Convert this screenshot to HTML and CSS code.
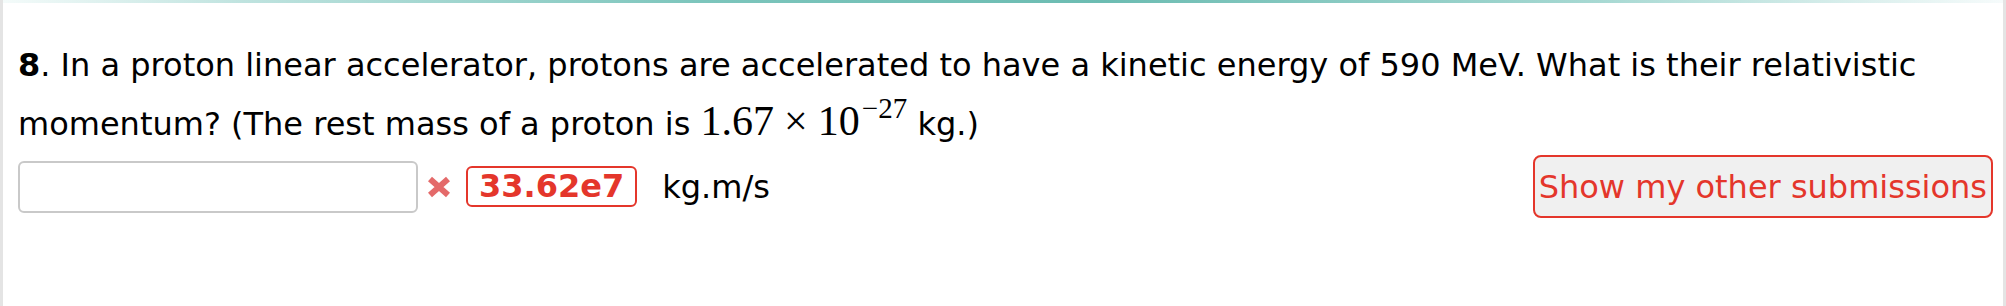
FILE: index.html
```html
<!DOCTYPE html>
<html lang="en">
<head>
<meta charset="utf-8">
<title>Question 8</title>
<link rel="stylesheet" href="styles.css">
</head>
<body>
<div class="frame">
  <div class="topline"></div>
  <div class="content">
    <p class="question"><b>8</b>. In a proton linear accelerator, protons are accelerated to have a kinetic energy of 590 MeV. What is their relativistic momentum? (The rest mass of a proton is <span class="math">1.67<span class="times">×</span>10<sup class="sup">−27</sup></span> kg.)</p>
    <div class="answer-row">
      <input class="answer-input" type="text" aria-label="Answer">
      <svg class="wrong" viewBox="0 0 28 24" width="28" height="24" aria-hidden="true">
        <path d="M5 4 L23 20 M23 4 L5 20" stroke="#e46a6a" stroke-width="6" stroke-linecap="butt" fill="none"/>
      </svg>
      <span class="prev">33.62e7</span>
      <span class="unit">kg.m/s</span>
      <button class="submissions" type="button">Show my other submissions</button>
    </div>
  </div>
</div>
</body>
</html>
```

FILE: styles.css
```css
html, body {
  margin: 0;
  padding: 0;
  background: #ffffff;
}

body {
  font-family: "DejaVu Sans", Verdana, sans-serif;
  color: #000000;
}

.frame {
  height: 306px;
  box-sizing: border-box;
  border-left: 3px solid #e4e4e4;
  border-right: 3px solid #e4e4e4;
}

.topline {
  height: 3px;
  background: linear-gradient(to right, #f4fbfa 0%, #bfe3df 12%, #7cc5bc 35%, #6cbcb2 55%, #a8d9d3 80%, #f6fbfb 100%);
}

.content {
  padding: 0 10px 0 15px;
}

.question {
  margin: 33px 0 0 0;
  font-size: 32px;
  line-height: 59px;
}

.question b {
  font-weight: bold;
}

.math {
  font-family: "Liberation Serif", "DejaVu Serif", serif;
  font-size: 42px;
  line-height: 1;
}

.times {
  margin: 0 0.24em;
}

.sup {
  font-size: 29px;
  line-height: 0.8;
  vertical-align: 0.6em;
  margin-left: 2px;
}

.answer-row {
  display: flex;
  align-items: center;
  margin-top: 1px;
}

.answer-input {
  width: 400px;
  height: 52px;
  box-sizing: border-box;
  border: 2px solid #c9c9c9;
  border-radius: 6px;
  margin: 0;
  padding: 0 8px;
  font-family: "DejaVu Sans", Verdana, sans-serif;
  font-size: 28px;
  background: #ffffff;
}

.wrong {
  margin-left: 7px;
  filter: blur(0.5px);
}

.prev {
  margin-left: 13px;
  border: 2px solid #e4362b;
  border-radius: 6px;
  padding: 1px 11px 2px;
  color: #e4362b;
  font-weight: bold;
  font-size: 32px;
  line-height: 34px;
}

.unit {
  margin-left: 25px;
  font-size: 32px;
}

.submissions {
  margin-left: auto;
  height: 63px;
  box-sizing: border-box;
  border: 2px solid #e4362b;
  border-radius: 8px;
  background: #f0f0f0;
  color: #e4362b;
  font-family: "DejaVu Sans", Verdana, sans-serif;
  font-size: 32px;
  padding: 0 4px;
  cursor: pointer;
}
```
